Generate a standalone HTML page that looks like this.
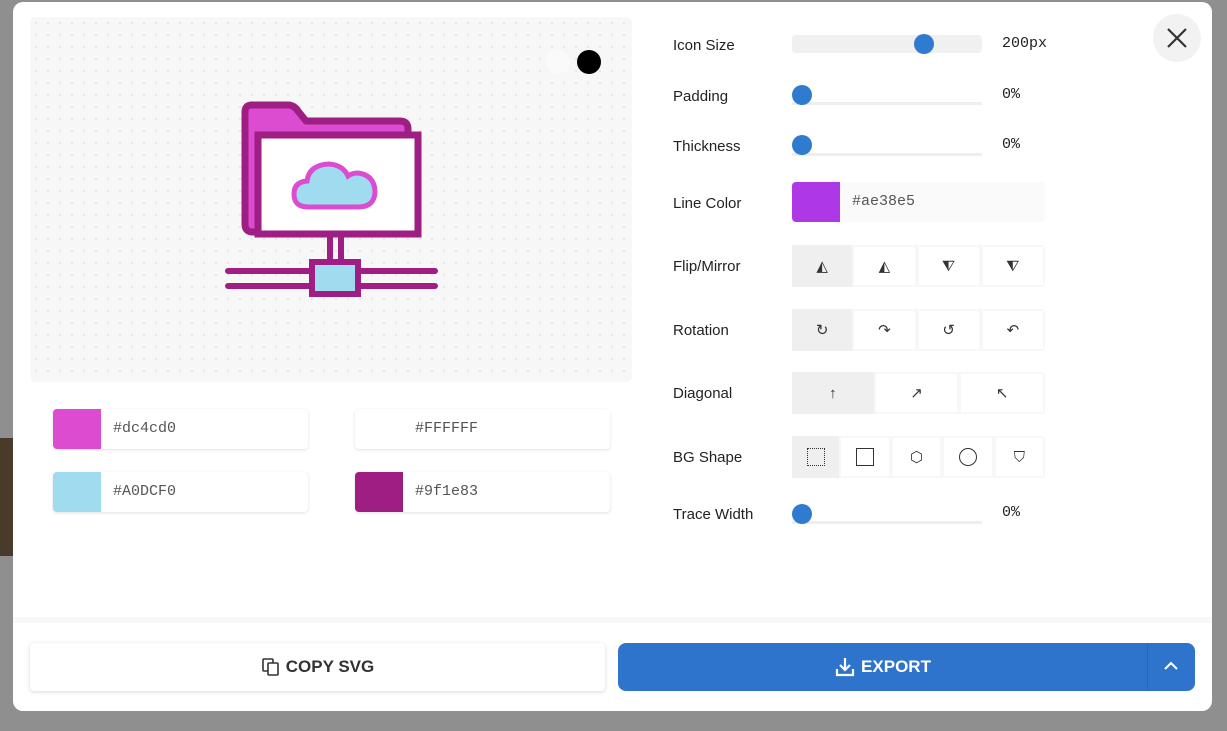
<!DOCTYPE html>
<html><head><meta charset="utf-8"><style>
*{margin:0;padding:0;box-sizing:border-box}
body{width:1227px;height:731px;background:#8f8f8f;position:relative;overflow:hidden;font-family:"Liberation Sans",sans-serif}
.a{position:absolute}
.modal{left:13px;top:2px;width:1199px;height:709px;background:#fff;border-radius:10px}
.prev{left:30px;top:17px;width:602px;height:365px;background-color:#f7f7f7;background-image:radial-gradient(circle,#e6e6e6 1px,transparent 1.3px);background-size:12px 12px;border-radius:6px}
.lbl{font-size:15px;color:#222;left:673px}
.track{height:18px;background:#f0f0f0;border-radius:4px}
.thumb{width:20px;height:20px;border-radius:50%;background:#2f7bd0}
.val{font-family:"Liberation Mono",monospace;font-size:15px;color:#222}
.sw{width:255px;height:40px;background:#fff;box-shadow:0 1px 3px rgba(0,0,0,.12);border-radius:4px}
.sw i{position:absolute;left:0;top:0;width:48px;height:40px;border-radius:4px 0 0 4px}
.sw span{position:absolute;left:60px;top:11px;font-family:"Liberation Mono",monospace;font-size:15px;color:#555}
.grp{height:42px;background:#f7f7f7;border-radius:4px;display:flex;padding:0}
.grp div{flex:1;display:flex;align-items:center;justify-content:center;font-size:15px;color:#333;background:#fff;margin:2px}
.grp div.on{background:#efefef;margin:0}
</style></head><body>
<div class="a" style="left:0;top:438px;width:13px;height:118px;background:#4a3a2a"></div>
<div class="a modal"></div>
<div class="a prev"></div>
<div class="a" style="left:546px;top:50px;width:24px;height:24px;border-radius:50%;background:#fafafa"></div>
<div class="a" style="left:577px;top:50px;width:24px;height:24px;border-radius:50%;background:#000"></div>
<svg class="a" style="left:0;top:0" width="640" height="400">
<path d="M245 112 q0-7 7-7 h36 q6 0 10 6 l8 10 h94 q8 0 8 8 v103 h-155 q-8 0 -8 -8 z" fill="#dc4cd0" stroke="#9f1e83" stroke-width="7" stroke-linejoin="round"/>
<rect x="258" y="135" width="160" height="99" fill="#fff" stroke="#9f1e83" stroke-width="7"/>
<path d="M308 207 q-14 0 -14 -13 q0 -12 13 -13 q2 -16 22 -17 q14 1 19 12 q4 -3 10 -3 q16 2 17 18 q0 16 -17 16 z" fill="#a0dcf0" stroke="#dc4cd0" stroke-width="5"/>
<path d="M330 237 v26 M341 237 v26" stroke="#9f1e83" stroke-width="6"/>
<path d="M228 271 h82 M360 271 h75 M228 286 h82 M360 286 h75" stroke="#9f1e83" stroke-width="6" stroke-linecap="round"/>
<rect x="312" y="262" width="46" height="32" fill="#a0dcf0" stroke="#9f1e83" stroke-width="6"/>
</svg>
<div class="a sw" style="left:53px;top:409px"><i style="background:#dc4cd0"></i><span>#dc4cd0</span></div>
<div class="a sw" style="left:355px;top:409px"><span>#FFFFFF</span></div>
<div class="a sw" style="left:53px;top:472px"><i style="background:#a0dcf0"></i><span>#A0DCF0</span></div>
<div class="a sw" style="left:355px;top:472px"><i style="background:#9f1e83"></i><span>#9f1e83</span></div>

<div class="a lbl" style="top:37px">Icon Size</div>
<div class="a track" style="left:792px;top:35px;width:190px"></div>
<div class="a thumb" style="left:914px;top:34px"></div>
<div class="a val" style="left:1002px;top:35px">200px</div>
<div class="a lbl" style="top:88px">Padding</div>
<div class="a" style="left:792px;top:102px;width:190px;height:3px;background:#eee"></div>
<div class="a thumb" style="left:792px;top:85px"></div>
<div class="a val" style="left:1002px;top:86px">0%</div>
<div class="a lbl" style="top:138px">Thickness</div>
<div class="a" style="left:792px;top:153px;width:190px;height:3px;background:#eee"></div>
<div class="a thumb" style="left:792px;top:135px"></div>
<div class="a val" style="left:1002px;top:136px">0%</div>
<div class="a lbl" style="top:195px">Line Color</div>
<div class="a sw" style="left:792px;top:182px;width:253px;box-shadow:none;background:#fafafa"><i style="background:#ae38e5;width:48px;height:40px"></i><span>#ae38e5</span></div>
<div class="a lbl" style="top:258px">Flip/Mirror</div>
<div class="a grp" style="left:792px;top:245px;width:253px"><div class="on">◭</div><div>◭</div><div>⧨</div><div>⧨</div></div>
<div class="a lbl" style="top:322px">Rotation</div>
<div class="a grp" style="left:792px;top:309px;width:253px"><div class="on">↻</div><div>↷</div><div>↺</div><div>↶</div></div>
<div class="a lbl" style="top:385px">Diagonal</div>
<div class="a grp" style="left:792px;top:372px;width:253px"><div class="on">↑</div><div>↗</div><div>↖</div></div>
<div class="a lbl" style="top:449px">BG Shape</div>
<div class="a grp" style="left:792px;top:436px;width:253px"><div class="on"><span style="width:18px;height:18px;border:1.5px dotted #333;display:block"></span></div><div><span style="width:18px;height:18px;border:1.5px solid #333;display:block"></span></div><div>⬡</div><div><span style="width:18px;height:18px;border:1.5px solid #333;border-radius:50%;display:block"></span></div><div>⛉</div></div>
<div class="a lbl" style="top:506px">Trace Width</div>
<div class="a" style="left:792px;top:521px;width:190px;height:3px;background:#eee"></div>
<div class="a thumb" style="left:792px;top:504px"></div>
<div class="a val" style="left:1002px;top:504px">0%</div>

<div class="a" style="left:1153px;top:14px;width:48px;height:48px;border-radius:50%;background:#f2f2f2"></div>
<svg class="a" style="left:1166px;top:27px" width="22" height="22"><path d="M2 2L20 20M20 2L2 20" stroke="#333" stroke-width="2.2"/></svg>

<div class="a" style="left:13px;top:617px;width:1199px;height:6px;background:#f8f8f8"></div>
<div class="a" style="left:30px;top:643px;width:575px;height:48px;background:#fff;box-shadow:0 1px 4px rgba(0,0,0,.15);border-radius:4px;display:flex;align-items:center;justify-content:center;font-weight:bold;font-size:17px;color:#333">
<svg width="20" height="20" style="margin-right:5px"><rect x="2" y="2" width="10" height="12" rx="1" fill="none" stroke="#333" stroke-width="1.6"/><rect x="7" y="6" width="10" height="12" rx="1" fill="#fff" stroke="#333" stroke-width="1.6"/></svg>COPY SVG</div>
<div class="a" style="left:618px;top:643px;width:577px;height:48px;background:#2f74cc;border-radius:8px"></div>
<div class="a" style="left:1147px;top:643px;width:1px;height:48px;background:#2a66b4"></div>
<div class="a" style="left:618px;top:643px;width:529px;height:48px;display:flex;align-items:center;justify-content:center;font-weight:bold;font-size:17px;color:#fff">
<svg width="22" height="22" style="margin-right:5px"><path d="M11 2v11M6 9l5 5 5-5M3 13v6h16v-6" fill="none" stroke="#fff" stroke-width="2.2"/></svg>EXPORT</div>
<svg class="a" style="left:1163px;top:659px" width="16" height="14"><path d="M2 10l6-6 6 6" fill="none" stroke="#fff" stroke-width="2"/></svg>
</body></html>
